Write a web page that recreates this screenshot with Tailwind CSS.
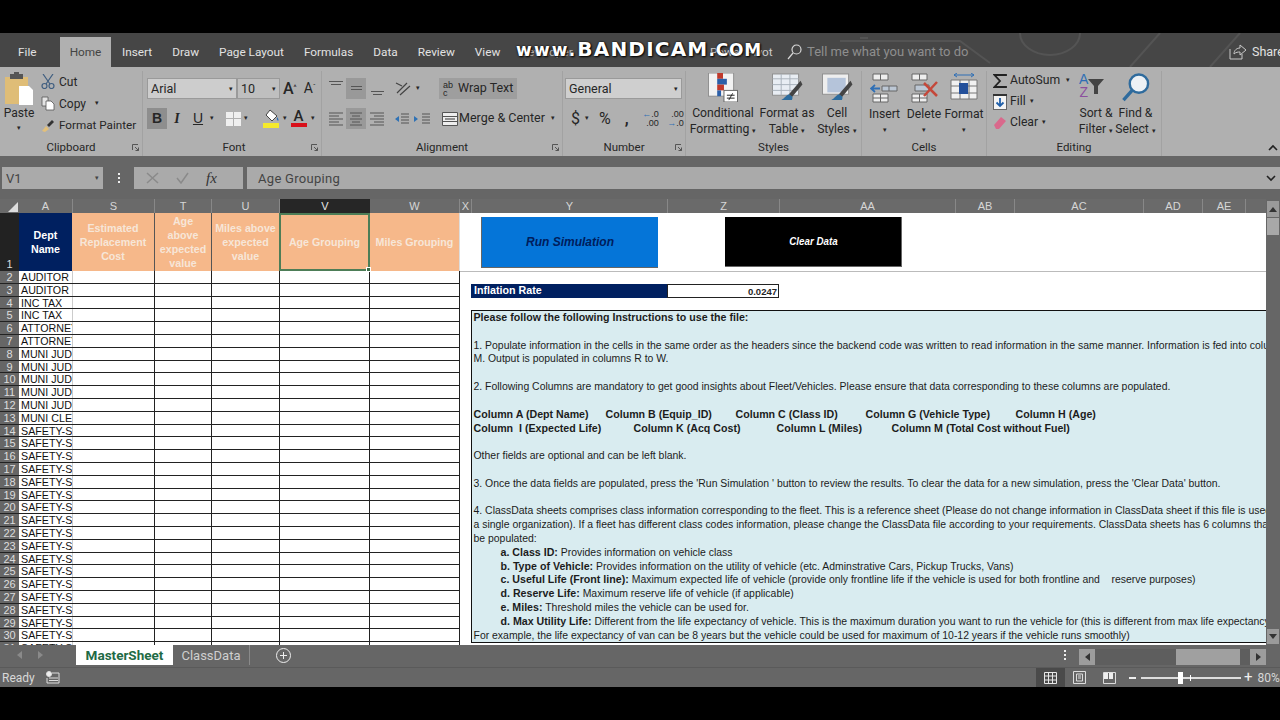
<!DOCTYPE html>
<html lang="en">
<head>
    <meta charset="UTF-8">
    <title>MasterSheet - Excel</title>
    <script src="https://cdn.jsdelivr.net/npm/@tailwindcss/browser@4"></script>
</head>
<body class="w-[1280px] h-[720px] overflow-hidden bg-black font-['Roboto',sans-serif] text-[12px] text-[#262626]">

    <div class="h-[33px]"></div>

    <!-- tabs -->
    <div class="relative h-[34px] bg-[#464646] flex items-end text-[11.8px] text-[#e2e2e2]">
        <svg class="absolute left-[840px] top-0 opacity-20" width="430" height="34" fill="none" stroke="#8c8c8c" stroke-width="2">
            <path d="M0 8H120L150 30M180 0a30 22 0 0 0 60 0M290 34L320 0M370 34L400 0M20 5h8"/>
        </svg>
        <div class="w-[60px] h-[30px] pl-[18px] leading-[31px]">File</div>
        <div class="w-[51px] h-[30px] bg-[#b0b0b0] text-[#444] text-center leading-[31px]">Home</div>
        <div class="flex h-[30px] leading-[31px] pl-[11px] gap-[20px]">
            <span>Insert</span><span>Draw</span><span>Page Layout</span><span>Formulas</span><span>Data</span><span>Review</span><span>View</span>
            <span class="text-[#bbb]">Developer</span>
        </div>
        <div class="absolute left-[710px] top-[4px] h-[30px] leading-[31px] text-[#ccc]">Power Pivot</div>
        <div class="absolute left-[787px] top-[4px] h-[30px] flex items-center gap-[5px] text-[#8e8e8e] text-[13px]">
            <svg width="15" height="16" viewBox="0 0 15 16" fill="none" stroke="#d8d8d8" stroke-width="1.2"><circle cx="9.5" cy="5.5" r="4.5"/><path d="M6 9L1 15"/></svg>
            <span>Tell me what you want to do</span>
        </div>
        <div class="absolute left-[1229px] top-[4px] h-[30px] flex items-center gap-[5px] whitespace-nowrap text-[12.5px]">
            <svg width="18" height="16" viewBox="0 0 18 16" fill="none" stroke="#c8c8c8"><path d="M1 5v10h12V10M5 10c0-4 3-6 6-6V1l6 5-6 5V8c-2 0-4 0-6 2z"/></svg>
            <span>Share</span>
        </div>
        <!-- watermark -->
        <div class="absolute left-[516px] top-[4px] font-['DejaVu_Sans',sans-serif] font-bold text-white whitespace-nowrap leading-[24px] [text-shadow:0_0_2px_#000,1px_1px_2px_#000] flex items-baseline">
            <span class="text-[17px] tracking-[2.2px]">www.</span><span class="text-[20px] tracking-[1.2px]">BANDICAM</span><span class="text-[17px] uppercase tracking-[0.8px]">.com</span>
        </div>
    </div>

    <!-- ribbon -->
    <div class="relative h-[89px] bg-[#b0b0b0] flex items-start pt-[4px]">

        <!-- clipboard -->
        <div class="w-[143px] h-[85px] border-r border-[#a2a2a2] flex flex-col">
            <div class="flex h-[68px]">
                <div class="w-[38px] flex flex-col items-center pt-[1px]">
                    <svg width="30" height="33" viewBox="0 0 30 33">
                        <rect x="1" y="5" width="23" height="27" fill="#dfbd77"/>
                        <rect x="6" y="2" width="13" height="5" fill="#555"/><rect x="10" y="0" width="5" height="3" fill="#555"/>
                        <path d="M15 14h10l4 4v15H15z" fill="#fff"/>
                    </svg>
                    <span class="leading-[16px]">Paste</span>
                    <span class="text-[7px] leading-[14px]">▾</span>
                </div>
                <div class="flex flex-col gap-[3px] pl-[3px]">
                    <div class="flex items-center h-[19px] gap-[4px] mt-[1px]">
                        <svg width="14" height="15" viewBox="0 0 14 15" fill="none" stroke="#3f5e80" stroke-width="1.2"><path d="M2 0l7 10M12 0L5 10"/><circle cx="3.5" cy="12" r="2.5"/><circle cx="10.5" cy="12" r="2.5"/></svg>
                        <span>Cut</span>
                    </div>
                    <div class="flex items-center h-[19px] gap-[4px]">
                        <svg width="14" height="15" viewBox="0 0 14 15" fill="#e4e4e4" stroke="#555" stroke-width="0.8"><path d="M1 1h6v9H1z"/><path d="M5 5h5l3 3v6H5z" fill="#fff"/></svg>
                        <span>Copy</span><span class="text-[7px] ml-[5px]">▾</span>
                    </div>
                    <div class="flex items-center h-[19px] gap-[4px]">
                        <svg width="14" height="14" viewBox="0 0 14 14"><path d="M1 12l4-5 3 3-4 3z" fill="#e3c07a"/><path d="M6 6l5-5 2 2-5 5z" fill="#333"/></svg>
                        <span class="whitespace-nowrap text-[11.7px]">Format Painter</span>
                    </div>
                </div>
            </div>
            <div class="relative h-[17px] text-center leading-[17px] text-[11.5px]">Clipboard
                <svg class="absolute right-[3px] top-[5px]" width="7" height="7" fill="none" stroke="#555"><path d="M.5 6V.5H6M3 3l3.5 3.5M6.5 3.5v3h-3"/></svg>
            </div>
        </div>

        <!-- font -->
        <div class="w-[179px] h-[85px] border-r border-[#a2a2a2] flex flex-col pl-[4px]">
            <div class="h-[68px] pt-[7px]">
                <div class="flex items-center h-[21px]">
                    <div class="w-[90px] h-[21px] pt-[1px] bg-[#cdcdcd] border border-[#9a9a9a] flex items-center justify-between px-[3px] text-[12.5px]"><span>Arial</span><span class="text-[7px]">▾</span></div>
                    <div class="w-[43px] h-[21px] pt-[1px] bg-[#bfbfbf] border border-[#9a9a9a] flex items-center justify-between px-[3px] text-[12.5px]"><span>10</span><span class="text-[7px]">▾</span></div>
                    <span class="ml-[3px] text-[16px] font-medium">A<sup class="text-[7px]">^</sup></span>
                    <span class="ml-[7px] text-[14px]">A<sup class="text-[7px]">ˇ</sup></span>
                </div>
                <div class="flex items-center h-[21px] mt-[9px]">
                    <div class="w-[20px] h-[21px] bg-[#8e8e8e] flex items-center justify-center font-['Liberation_Sans'] font-bold text-[14px]">B</div>
                    <span class="ml-[3px] w-[14px] text-center font-['Liberation_Serif'] italic font-bold text-[14px]">I</span>
                    <span class="ml-[7px] w-[14px] text-center font-['Liberation_Sans'] underline text-[14px]">U</span>
                    <span class="ml-[5px] text-[7px]">▾</span>
                    <svg class="ml-[12px]" width="15" height="14"><path d="M0 0h7v6H0zM8 0h7v6H8zM0 7h7v7H0zM8 7h7v7H8z" fill="#efefef"/></svg>
                    <span class="ml-[3px] text-[7px]">▾</span>
                    <svg class="ml-[14px]" width="18" height="19" viewBox="0 0 18 19"><path d="M8 1l7 6-5 5-6-6z" fill="#fff" stroke="#444"/><path d="M15 8c1.5 2 2 3 1 4-1-1-1.500-2-1-4" fill="#2f6fb5"/><rect x="1" y="14" width="16" height="5" fill="#f5ea2c"/></svg>
                    <span class="ml-[3px] text-[7px]">▾</span>
                    <div class="ml-[3px] w-[17px] flex flex-col items-center leading-[13px]"><span class="text-[15px] font-medium">A</span><span class="block w-[16px] h-[4px] bg-[#d9101a]"></span></div>
                    <span class="ml-[4px] text-[7px]">▾</span>
                </div>
            </div>
            <div class="relative h-[17px] text-center leading-[17px] text-[11.5px]">Font
                <svg class="absolute right-[3px] top-[5px]" width="7" height="7" fill="none" stroke="#555"><path d="M.5 6V.5H6M3 3l3.5 3.5M6.5 3.5v3h-3"/></svg>
            </div>
        </div>

        <!-- alignment -->
        <div class="w-[241px] h-[85px] border-r border-[#a2a2a2] flex flex-col">
            <div class="h-[68px] pt-[7px] pl-[6px]">
                <div class="flex items-center h-[21px]">
                    <svg width="60" height="21" viewBox="0 0 60 21" stroke="#555"><rect x="18" y="0" width="20" height="21" fill="#999" stroke="none"/><path d="M1 3.500h14M3 6.500h10M23 8.500h11M23 11.500h11M43 13.500h13M45 16.500h9"/></svg>
                    <svg class="ml-[6px]" width="20" height="16" viewBox="0 0 20 16" fill="none" stroke="#444"><path d="M3 12L13 2M6 14L16 5M2 2l6 3" stroke-width="1.200"/></svg>
                    <span class="ml-[2px] text-[7px]">▾</span>
                    <div class="ml-[19px] w-[78px] h-[21px] bg-[#9e9e9e] flex items-center gap-[3px] pl-[4px] text-[12.5px]">
                        <span class="text-[9px] leading-[8px] font-['Liberation_Sans'] w-[12px]">ab c</span>
                        <span>Wrap Text</span>
                    </div>
                </div>
                <div class="flex items-center h-[21px] mt-[9px]">
                    <svg width="60" height="21" viewBox="0 0 60 21" stroke="#555"><rect x="18" y="0" width="20" height="21" fill="#999" stroke="none"/><path d="M1 5h14M1 8h10M1 11h14M1 14h10M1 17h14M22 5h12M24 8h8M22 11h12M24 14h8M22 17h12M42 5h14M46 8h10M42 11h14M46 14h10M42 17h14"/></svg>
                    <svg class="ml-[6px]" width="40" height="14" viewBox="0 0 40 14" stroke="#555"><path d="M7 2h8M7 5h8M7 8h8M7 11h8M28 2h8M28 5h8M28 8h8M28 11h8"/><path d="M5 4L1 7l4 3zM20 4l4 3-4 3z" fill="#2f72b5" stroke="none"/></svg>
                    <svg class="ml-[8px]" width="16" height="14" viewBox="0 0 16 14" fill="#eee" stroke="#555"><path d="M.5.5h15v13H.5zM.5 4.500h15M.5 9.500h15"/><path d="M3 7h10" stroke="#333"/></svg>
                    <span class="ml-[1px] whitespace-nowrap text-[12.5px]">Merge &amp; Center</span>
                    <span class="ml-[6px] text-[7px]">▾</span>
                </div>
            </div>
            <div class="relative h-[17px] text-center leading-[17px] text-[11.5px]">Alignment
                <svg class="absolute right-[3px] top-[5px]" width="7" height="7" fill="none" stroke="#555"><path d="M.5 6V.5H6M3 3l3.5 3.5M6.5 3.5v3h-3"/></svg>
            </div>
        </div>

        <!-- number -->
        <div class="w-[123px] h-[85px] border-r border-[#a2a2a2] flex flex-col">
            <div class="h-[68px] pt-[7px] pl-[2px]">
                <div class="w-[117px] h-[21px] pt-[1px] bg-[#cfcfcf] border border-[#9a9a9a] flex items-center justify-between px-[3px] text-[12.5px]"><span>General</span><span class="text-[7px]">▾</span></div>
                <div class="flex items-center h-[21px] mt-[9px]">
                    <span class="ml-[6px] text-[16px]">$</span>
                    <span class="ml-[5px] text-[7px]">▾</span>
                    <span class="ml-[10px] text-[16px]">%</span>
                    <span class="ml-[14px] text-[16px] font-bold leading-[12px]">,</span>
                    <span class="ml-[10px] text-[9px] leading-[9px] w-[20px] text-right font-['Liberation_Sans']"><span class="text-[#2f6fb5]">←</span>.0<br>.00</span>
                    <span class="ml-[7px] text-[9px] leading-[9px] w-[18px] text-right font-['Liberation_Sans']">.00<br><span class="text-[#2f6fb5]">→</span>.0</span>
                </div>
            </div>
            <div class="relative h-[17px] text-center leading-[17px] text-[11.5px]">Number
                <svg class="absolute right-[3px] top-[5px]" width="7" height="7" fill="none" stroke="#555"><path d="M.5 6V.5H6M3 3l3.5 3.5M6.5 3.5v3h-3"/></svg>
            </div>
        </div>

        <!-- styles -->
        <div class="w-[176px] h-[85px] border-r border-[#a2a2a2] flex flex-col">
            <div class="h-[68px] flex text-center leading-[16px] pt-[2px] text-[12.2px]">
                <div class="w-[74px] flex flex-col items-center">
                    <svg width="30" height="30" viewBox="0 0 30 30">
                        <rect x="0" y="0" width="26" height="24" fill="#f2f2f2" stroke="#8f8f8f"/>
                        <rect x="9" y="0" width="6" height="6" fill="#c0392b"/><rect x="9" y="6" width="10" height="6" fill="#2b5fa8"/><rect x="9" y="12" width="7" height="6" fill="#c0392b"/><rect x="9" y="18" width="4" height="6" fill="#2b5fa8"/>
                        <rect x="16" y="18" width="14" height="12" fill="#fff" stroke="#666"/><path d="M19 23h8M19 26h8M25 21l-4 7" stroke="#222" fill="none"/>
                    </svg>
                    <span class="mt-[3px]">Conditional</span><span class="whitespace-nowrap">Formatting <span class="text-[7px]">▾</span></span>
                </div>
                <div class="w-[54px] flex flex-col items-center">
                    <svg width="32" height="30" viewBox="0 0 32 30">
                        <rect x="1" y="1" width="27" height="22" fill="#e8edf3" stroke="#8f8f8f"/><path d="M1 6h27M1 12h27M1 18h27M10 1v22M19 1v22" stroke="#a9b2bb"/>
                        <path d="M30 8L18 22l3 3L32 12z" fill="#444"/><path d="M18 22c-3 1-4 4-8 6h11c1-2 1-3 0-4z" fill="#2d6c9e"/>
                    </svg>
                    <span class="mt-[3px] whitespace-nowrap">Format as</span><span class="whitespace-nowrap">Table <span class="text-[7px]">▾</span></span>
                </div>
                <div class="w-[46px] flex flex-col items-center">
                    <svg width="32" height="30" viewBox="0 0 32 30">
                        <rect x="1" y="1" width="27" height="21" fill="#eee" stroke="#8f8f8f"/><rect x="6" y="5" width="19" height="15" fill="#b5c4da"/>
                        <path d="M30 8L18 22l3 3L32 12z" fill="#444"/><path d="M18 22c-3 1-4 4-8 6h11c1-2 1-3 0-4z" fill="#2d6c9e"/>
                    </svg>
                    <span class="mt-[3px]">Cell</span><span class="whitespace-nowrap">Styles <span class="text-[7px]">▾</span></span>
                </div>
            </div>
            <div class="h-[17px] text-center leading-[17px] text-[11.5px]">Styles</div>
        </div>

        <!-- cells -->
        <div class="w-[125px] h-[85px] border-r border-[#a2a2a2] flex flex-col">
            <div class="h-[68px] flex text-center leading-[16px] pl-[3px] pt-[2px] text-[12.2px]">
                <div class="w-[39px] flex flex-col items-center">
                    <svg width="30" height="30" viewBox="0 0 30 30" stroke="#666" fill="#eee"><path d="M3 1h15v6H3zM10.500 1v6M3 21h15v8H3zM3 25h15M10.500 21v8"/><path d="M12 13h15v5H12zM19 13v5" fill="#bcc7d4"/><path d="M10 15.500H1M5 12l-4 3.500L5 19" stroke="#2f6fb5" stroke-width="1.800" fill="none"/></svg>
                    <span class="mt-[3px]">Insert</span><span class="text-[7px]">▾</span>
                </div>
                <div class="w-[40px] flex flex-col items-center">
                    <svg width="30" height="30" viewBox="0 0 30 30" stroke="#666" fill="#eee"><path d="M3 1h15v6H3zM10.500 1v6M3 21h15v8H3zM3 25h15M10.500 21v8"/><path d="M6 12h14v6H6z" fill="#bcc7d4"/><path d="M15 10l13 13M28 9L15 23" stroke="#c4483a" stroke-width="2.500" fill="none"/></svg>
                    <span class="mt-[3px]">Delete</span><span class="text-[7px]">▾</span>
                </div>
                <div class="w-[40px] flex flex-col items-center">
                    <svg width="28" height="30" viewBox="0 0 28 30" stroke="#777" fill="#f1f1f1"><path d="M1 7h26v19H1zM10 7v19M19 7v19M1 13h26M1 20h26"/><rect x="9" y="10" width="9" height="11" fill="#24509a" stroke="none"/><path d="M4 2h20M4 2l3-2M4 2l3 2M24 2l-3-2M24 2l-3 2" stroke="#2f6fb5" fill="none"/></svg>
                    <span class="mt-[3px]">Format</span><span class="text-[7px]">▾</span>
                </div>
            </div>
            <div class="h-[17px] text-center leading-[17px] text-[11.5px]">Cells</div>
        </div>

        <!-- editing -->
        <div class="w-[175px] h-[85px] border-r border-[#a2a2a2] flex flex-col">
            <div class="h-[68px] flex text-[12.2px]">
                <div class="w-[88px] pl-[6px] flex flex-col gap-[2px]">
                    <div class="flex items-center h-[19px] gap-[3px]">
                        <svg width="14" height="14" viewBox="0 0 14 14" fill="none" stroke="#222" stroke-width="1.800"><path d="M13 2V1H1.500L7 7l-5.500 6H13v-1"/></svg>
                        <span>AutoSum</span><span class="ml-[3px] text-[7px]">▾</span>
                    </div>
                    <div class="flex items-center h-[19px] gap-[3px]">
                        <svg width="14" height="16" viewBox="0 0 14 16"><rect x="0.500" y="0.500" width="13" height="15" fill="#f4f4f4" stroke="#666"/><path d="M0 0h14v2H0z" fill="#333"/><path d="M7 4v8M3.500 8.500L7 12l3.500-3.500" stroke="#1f5ea8" stroke-width="1.800" fill="none"/></svg>
                        <span>Fill</span><span class="ml-[1px] text-[7px]">▾</span>
                    </div>
                    <div class="flex items-center h-[19px] gap-[3px]">
                        <svg width="14" height="14" viewBox="0 0 14 14"><path d="M1 9l7-8 5 4-7 8H3z" fill="#d9698c"/></svg>
                        <span>Clear</span><span class="ml-[1px] text-[7px]">▾</span>
                    </div>
                </div>
                <div class="w-[42px] flex flex-col items-center text-center leading-[16px] pt-[2px]">
                    <div class="h-[30px] w-[34px] flex">
                        <span class="font-['Liberation_Sans'] text-[14px] leading-[13px] font-medium"><span class="text-[#2f6fb5]">A</span><br><span class="text-[#8c4f9e]">Z</span></span>
                        <svg class="mt-[6px]" width="16" height="15" viewBox="0 0 16 15"><path d="M0 0h16L10 7v8H6V7z" fill="#444"/></svg>
                    </div>
                    <span class="mt-[3px] whitespace-nowrap">Sort &amp;</span><span class="whitespace-nowrap">Filter <span class="text-[7px]">▾</span></span>
                </div>
                <div class="w-[37px] flex flex-col items-center text-center leading-[16px] pt-[2px]">
                    <svg width="30" height="30" viewBox="0 0 30 30" fill="#edf1f5" stroke="#2f6b9d" stroke-width="2.500"><circle cx="18" cy="11" r="9.500"/><path d="M11 18L2 28" stroke-width="3.500"/></svg>
                    <span class="mt-[3px] whitespace-nowrap">Find &amp;</span><span class="whitespace-nowrap">Select <span class="text-[7px]">▾</span></span>
                </div>
            </div>
            <div class="h-[17px] text-center leading-[17px] text-[11.5px]">Editing</div>
        </div>

        <svg class="absolute right-[2px] top-[77px]" width="10" height="7" fill="none" stroke="#222" stroke-width="1.600"><path d="M1 6l4-4 4 4"/></svg>
    </div>

    <!-- formula bar -->
    <div class="h-[43px] bg-[#666] pt-[11px] flex items-start">
        <div class="ml-[2px] w-[101px] h-[22px] pt-[1px] bg-[#aaa] flex items-center justify-between px-[4px] text-[13px] text-[#444]"><span>V1</span><span class="text-[7px]">▾</span></div>
        <div class="w-[31px] h-[22px] flex flex-col items-center justify-center gap-[2px]">
            <i class="w-[2px] h-[2px] bg-[#eee]"></i><i class="w-[2px] h-[2px] bg-[#eee]"></i><i class="w-[2px] h-[2px] bg-[#eee]"></i>
        </div>
        <div class="w-[109px] h-[22px] bg-[#aaa] flex items-center pl-[12px] gap-[17px]">
            <svg width="13" height="12" stroke="#8a8a8a" stroke-width="1.500"><path d="M1 1l11 10M12 1L1 11"/></svg>
            <svg width="13" height="12" fill="none" stroke="#8a8a8a" stroke-width="1.500"><path d="M1 6l4 5 7-10"/></svg>
            <span class="font-['Liberation_Serif'] italic text-[15px] text-[#333]">fx</span>
        </div>
        <div class="ml-[4px] flex-1 h-[22px] pt-[1px] bg-[#aaa] flex items-center justify-between pl-[11px] pr-[4px] text-[13px] text-[#444] tracking-[0.3px]">
            <span>Age Grouping</span>
            <svg width="10" height="7" fill="none" stroke="#222" stroke-width="1.600"><path d="M1 1l4 4 4-4"/></svg>
        </div>
    </div>

    <div class="flex h-[446px]">
        <div class="w-[1266px] shrink-0">
            <!-- column headers -->
            <div class="h-[14px] bg-[#6a6a6a] flex text-[11px] leading-[14px] text-[#d6d6d6] font-['Liberation_Sans']">
                <div class="w-[19px] flex items-end justify-end pr-[1px] pb-[1px]"><svg width="10" height="10"><path d="M10 0v10H0z" fill="#ddd"/></svg></div>
                <div class="w-[54px] text-center border-r border-[#888]">A</div>
                <div class="w-[82px] text-center border-r border-[#888]">S</div>
                <div class="w-[57px] text-center border-r border-[#888]">T</div>
                <div class="w-[68px] text-center border-r border-[#888]">U</div>
                <div class="w-[90px] text-center bg-[#262626] text-[#e8e8e8]">V</div>
                <div class="w-[90px] text-center border-r border-[#888]">W</div>
                <div class="w-[12px] text-center border-r border-[#888]">X</div>
                <div class="w-[196px] text-center border-r border-[#888]">Y</div>
                <div class="w-[112px] text-center border-r border-[#888]">Z</div>
                <div class="w-[176px] text-center border-r border-[#888]">AA</div>
                <div class="w-[59px] text-center border-r border-[#888]">AB</div>
                <div class="w-[129px] text-center border-r border-[#888]">AC</div>
                <div class="w-[59px] text-center border-r border-[#888]">AD</div>
                <div class="w-[43px] text-center border-r border-[#888]">AE</div>
            </div>

            <!-- sheet -->
            <div class="h-[432px] flex bg-white font-['Liberation_Sans',sans-serif] overflow-hidden">
                <!-- left columns -->
                <div class="w-[460px] h-[432px] overflow-hidden shrink-0">
                    <div class="flex h-[58px] font-bold text-[10.7px] leading-[14px] text-center text-[#f6e6d8]">
                        <div class="w-[19px] bg-[#222] text-[#ddd] font-normal text-[11px] flex items-end justify-center">1</div>
                        <div class="w-[53px] bg-[#002060] text-white flex items-center justify-center">Dept<br>Name</div>
                        <div class="w-[83px] bg-[#f6b88a] border-r border-[#555] flex items-center justify-center">Estimated<br>Replacement<br>Cost</div>
                        <div class="w-[57px] bg-[#f6b88a] border-r border-[#555] flex items-center justify-center">Age<br>above<br>expected<br>value</div>
                        <div class="w-[67px] bg-[#f6b88a] flex items-center justify-center whitespace-nowrap">Miles above<br>expected<br>value</div>
                        <div class="w-[91px] bg-[#f6b88a] border-2 border-[#4d7d57] flex items-center justify-center relative">Age Grouping
                            <i class="absolute -right-[3px] -bottom-[3px] w-[5px] h-[5px] bg-[#3c6e47] border border-white"></i>
                        </div>
                        <div class="w-[90px] bg-[#f6b88a] flex items-center justify-center border-r border-[#ddd]">Miles Grouping</div>
                    </div>
                    <div id="rows"></div>
                </div>

                <!-- right area -->
                <div class="w-[806px] h-[432px] overflow-hidden shrink-0">
                    <div class="h-[59px] border-b border-[#bbb] flex items-start pt-[4px] pl-[21px] text-[12px] font-bold italic">
                        <div class="w-[177px] h-[51px] bg-[#0575d8] text-[#001d5c] flex items-center justify-center border-b border-l border-[#666]">Run Simulation</div>
                        <div class="ml-[67px] w-[177px] h-[50px] bg-black text-white flex items-center justify-center border-r border-b border-[#666]"><span class="inline-block text-[11.5px] scale-x-[0.85]">Clear Data</span></div>
                    </div>
                    <div class="mt-[12px] ml-[11px] flex h-[14px] text-[10.7px] leading-[13px]">
                        <div class="w-[196px] bg-[#002060] text-white font-bold pl-[3px]">Inflation Rate</div>
                        <div class="w-[112px] border border-[#222] text-right pr-[1px] font-bold text-[9.5px]">0.0247</div>
                    </div>
                    <div class="mt-[12px] ml-[11px] h-[333px] bg-[#d9ecf0] border-y-[1.5px] border-l-[1.5px] border-[#111] pl-[1.5px] text-[10.45px] leading-[13.82px] text-[#1c1c1c] whitespace-nowrap overflow-hidden">
                        <div class="font-bold text-[10.65px]">Please follow the following Instructions to use the file:</div>
                        <div class="h-[13.82px]"></div>
                        <div>1. Populate information in the cells in the same order as the headers since the backend code was written to read information in the same manner. Information is fed into columns A to</div>
                        <div>M. Output is populated in columns R to W.</div>
                        <div class="h-[13.82px]"></div>
                        <div>2. Following Columns are mandatory to get good insights about Fleet/Vehicles. Please ensure that data corresponding to these columns are populated.</div>
                        <div class="h-[13.82px]"></div>
                        <div class="flex font-bold text-[10.65px]"><span class="w-[132px]">Column A (Dept Name)</span><span class="w-[130px]">Column B (Equip_ID)</span><span class="w-[130px]">Column C (Class ID)</span><span class="w-[150px]">Column G (Vehicle Type)</span><span>Column H (Age)</span></div>
                        <div class="flex font-bold text-[10.65px]"><span class="w-[160px]">Column&nbsp; I (Expected Life)</span><span class="w-[143px]">Column K (Acq Cost)</span><span class="w-[115px]">Column L (Miles)</span><span>Column M (Total Cost without Fuel)</span></div>
                        <div class="h-[13.82px]"></div>
                        <div>Other fields are optional and can be left blank.</div>
                        <div class="h-[13.82px]"></div>
                        <div>3. Once the data fields are populated, press the 'Run Simulation ' button to review the results. To clear the data for a new simulation, press the 'Clear Data' button.</div>
                        <div class="h-[13.82px]"></div>
                        <div>4. ClassData sheets comprises class information corresponding to the fleet. This is a reference sheet (Please do not change information in ClassData sheet if this file is used by</div>
                        <div>a single organization). If a fleet has different class codes information, please change the ClassData file according to your requirements. ClassData sheets has 6 columns that need to</div>
                        <div>be populated:</div>
                        <div class="pl-[27px]"><b class="text-[10.65px]">a. Class ID:</b> Provides information on vehicle class</div>
                        <div class="pl-[27px]"><b class="text-[10.65px]">b. Type of Vehicle:</b> Provides information on the utility of vehicle (etc. Adminstrative Cars, Pickup Trucks, Vans)</div>
                        <div class="pl-[27px]"><b class="text-[10.65px]">c. Useful Life (Front line):</b> Maximum expected life of vehicle (provide only frontline life if the vehicle is used for both frontline and &nbsp;&nbsp; reserve purposes)</div>
                        <div class="pl-[27px]"><b class="text-[10.65px]">d. Reserve Life:</b> Maximum reserve life of vehicle (if applicable)</div>
                        <div class="pl-[27px]"><b class="text-[10.65px]">e. Miles:</b> Threshold miles the vehicle can be used for.</div>
                        <div class="pl-[27px]"><b class="text-[10.65px]">d. Max Utility Life:</b> Different from the life expectancy of vehicle. This is the maximum duration you want to run the vehicle for (this is different from max life expectancy of</div>
                        <div>For example, the life expectancy of van can be 8 years but the vehicle could be used for maximum of 10-12 years if the vehicle runs smoothly)</div>
                    </div>
                </div>
            </div>
        </div>

        <!-- vertical scrollbar -->
        <div class="w-[14px] h-[446px] bg-[#666] pt-[2px] pb-[1px] shrink-0 flex flex-col items-center">
            <div class="w-[12px] h-[16px] bg-[#9a9a9a] flex items-center justify-center"><svg width="8" height="5"><path d="M4 0l4 5H0z" fill="#333"/></svg></div>
            <div class="w-[12px] h-[17px] mt-[1px] bg-[#a8a8a8]"></div>
            <div class="w-[12px] h-[15px] mt-auto bg-[#9a9a9a] flex items-center justify-center"><svg width="8" height="5"><path d="M4 5l4-5H0z" fill="#333"/></svg></div>
        </div>
    </div>

    <!-- sheet tabs -->
    <div class="h-[22px] bg-[#666] flex items-start text-[13px] text-[#cfcfcf]">
        <div class="w-[76px] h-[20px] flex items-center pl-[17px] gap-[16px]">
            <svg width="5" height="8"><path d="M5 0v8L0 4z" fill="#8a8a8a"/></svg>
            <svg width="5" height="8"><path d="M0 0v8l5-4z" fill="#8a8a8a"/></svg>
        </div>
        <div class="w-[97px] h-[20px] bg-white text-[#1f6b46] font-bold text-[13.5px] text-center leading-[21px]">MasterSheet</div>
        <div class="w-[77px] h-[20px] text-center leading-[21px] border-r border-[#8a8a8a]">ClassData</div>
        <div class="ml-[26px] mt-[3px] w-[15px] h-[15px] rounded-full border border-[#eee] flex items-center justify-center">
            <svg width="9" height="9" stroke="#eee"><path d="M4.500 1v7M1 4.500h7"/></svg>
        </div>
        <div class="ml-[767px] w-[14px] h-[20px] flex flex-col items-center justify-center gap-[2px]">
            <i class="w-[2px] h-[2px] bg-[#eee]"></i><i class="w-[2px] h-[2px] bg-[#eee]"></i><i class="w-[2px] h-[2px] bg-[#eee]"></i>
        </div>
        <div class="ml-[7px] mt-[4px] w-[187px] h-[16px] bg-[#5e5e5e] flex items-stretch">
            <div class="w-[16px] bg-[#9c9c9c] flex items-center justify-center"><svg width="5" height="8"><path d="M5 0v8L0 4z" fill="#333"/></svg></div>
            <div class="ml-[81px] w-[64px] bg-[#a0a0a0]"></div>
            <div class="ml-auto w-[16px] bg-[#9c9c9c] flex items-center justify-center"><svg width="5" height="8"><path d="M0 0v8l5-4z" fill="#333"/></svg></div>
        </div>
    </div>

    <!-- status bar -->
    <div class="h-[20px] bg-[#666] flex items-center text-[12px] text-[#d8d8d8] border-t border-[#5a5a5a]">
        <span class="ml-[2px] w-[31px]">Ready</span>
        <svg class="ml-[13px]" width="14" height="13" viewBox="0 0 14 13" fill="none" stroke="#ddd"><circle cx="3" cy="3" r="2.500" fill="#eee"/><path d="M6 2h7v10H1V7M3 7h9M3 9.500h9"/></svg>
        <div class="ml-[976px] w-[29px] h-[19px] bg-[#4a4a4a] flex items-center justify-center">
            <svg width="13" height="12" fill="none" stroke="#e8e8e8"><path d="M.5.5h12v11H.5zM4.500.5v11M8.500.5v11M.5 4h12M.5 8h12"/></svg>
        </div>
        <svg class="ml-[8px]" width="13" height="13" fill="none" stroke="#ddd"><path d="M.5.5h12v12H.5zM3.500 3h6v7h-6zM5 5h3M5 7h3"/></svg>
        <svg class="ml-[17px]" width="13" height="12" fill="none" stroke="#ddd"><path d="M.5.5h12v11H.5z"/><path d="M1 1h4v6H1zM6 1h4v6H6z" fill="#eee" stroke="none"/></svg>
        <span class="ml-[13px] w-[7px] h-[2px] bg-[#eee]"></span>
        <div class="ml-[5px] relative w-[100px] h-[2px] bg-[#ddd]">
            <i class="absolute left-[37px] -top-[5px] w-[5px] h-[12px] bg-white"></i>
            <i class="absolute left-[49px] -top-[2px] w-[1px] h-[6px] bg-white"></i>
        </div>
        <span class="ml-[3px] text-[15px] leading-[15px] text-[#eee]">+</span>
        <span class="ml-[5px] whitespace-nowrap">80%</span>
    </div>

    <script>
        const depts = ['AUDITOR', 'AUDITOR', 'INC TAX', 'INC TAX', 'ATTORNEY', 'ATTORNEY', 'MUNI JUDGE', 'MUNI JUDGE', 'MUNI JUDGE', 'MUNI JUDGE', 'MUNI JUDGE', 'MUNI CLERK'];
        let html = '';
        for (let n = 2; n <= 31; n++) {
            const dept = depts[n - 2] || 'SAFETY-SERV';
            html += `<div class="flex h-[12.8px] text-[10.7px] leading-[12px] border-b border-[#222]">
                <div class="w-[19px] bg-[#666] text-[#ddd] text-center text-[11px]">${n}</div>
                <div class="w-[54px] overflow-hidden whitespace-nowrap pl-[2px] text-[#111] border-r border-[#ccc]">${dept}</div>
                <div class="w-[82px] border-r border-[#222]"></div>
                <div class="w-[57px] border-r border-[#222]"></div>
                <div class="w-[68px] border-r border-[#222]"></div>
                <div class="w-[90px] border-r border-[#222]"></div>
                <div class="w-[90px] border-r border-[#222]"></div>
            </div>`;
        }
        document.getElementById('rows').innerHTML = html;
    </script>
</body>
</html>
